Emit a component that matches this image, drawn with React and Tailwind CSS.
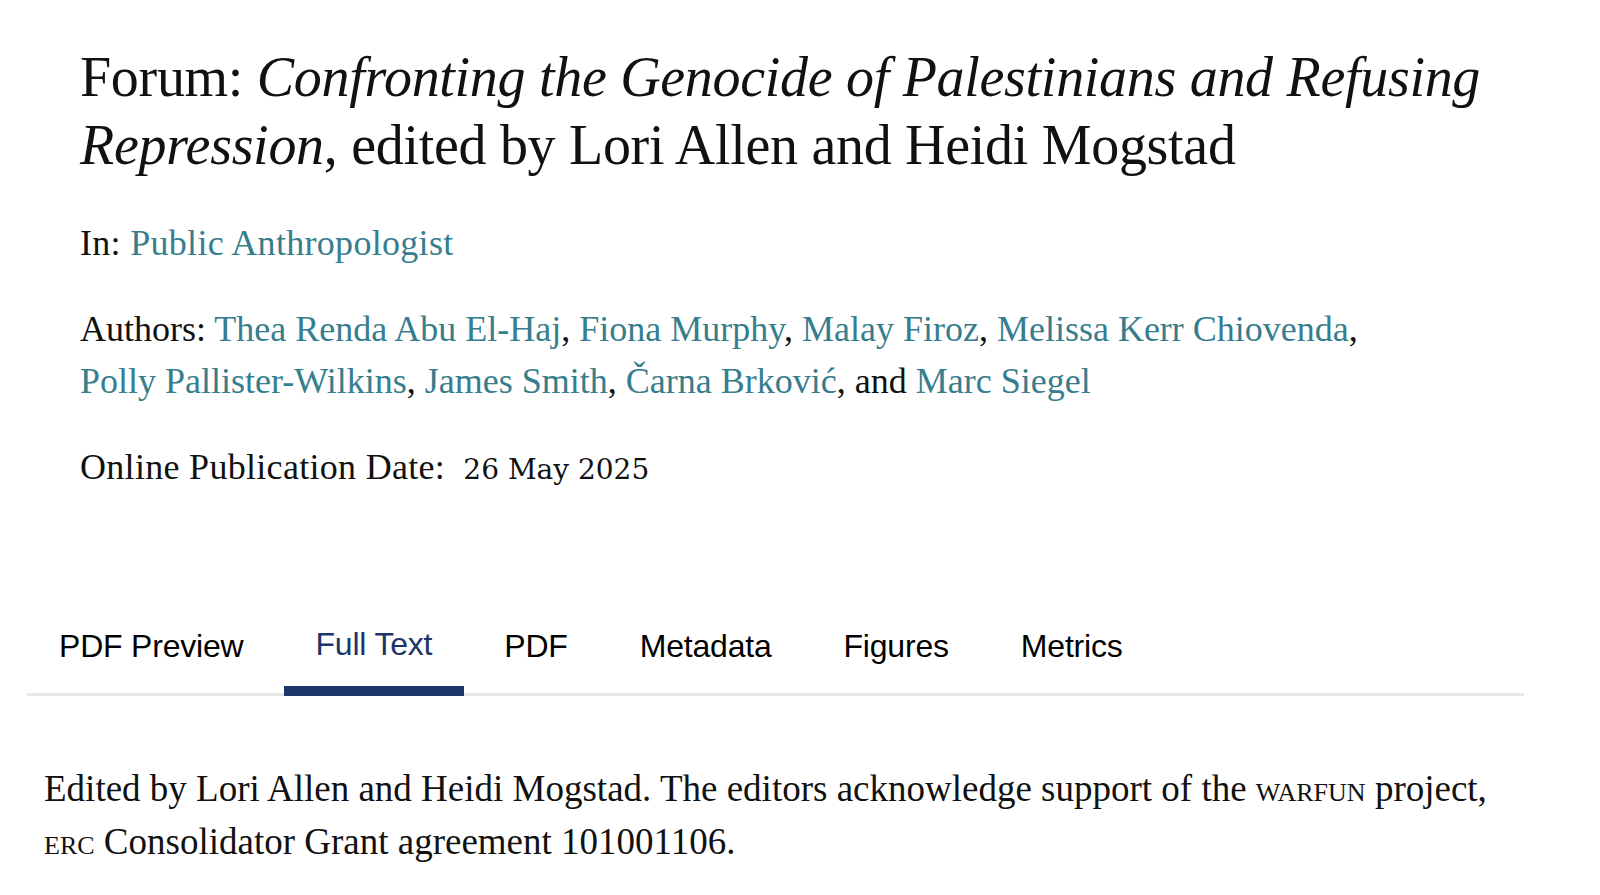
import React from "react";

const serif = "font-['Liberation_Serif','Times_New_Roman',serif]";

const authors = [
  "Thea Renda Abu El-Haj",
  "Fiona Murphy",
  "Malay Firoz",
  "Melissa Kerr Chiovenda",
];
const authors2 = [
  "Polly Pallister-Wilkins",
  "James Smith",
  "Čarna Brković",
];

const tabs = ["PDF Preview", "Full Text", "PDF", "Metadata", "Figures", "Metrics"];

const Link = ({ children }) => (
  <a href="#" className="text-[#367d8d] hover:underline">
    {children}
  </a>
);

export default function App() {
  return (
    <div className={`min-h-screen bg-white text-[#111] ${serif}`}>
      <div className="pl-[80px] pt-[43px]">
        <h1 className="text-[56px] leading-[68px] tracking-[-0.3px]">
          Forum: <i>Confronting the Genocide of Palestinians and Refusing</i>
          <br />
          <i>Repression</i>, edited by Lori Allen and Heidi Mogstad
        </h1>

        <p className="mt-[38px] text-[36px] leading-[52px] tracking-[0.3px]">
          In: <Link>Public Anthropologist</Link>
        </p>

        <p className="mt-[34px] text-[36px] leading-[52px]">
          Authors:{" "}
          {authors.map((a, i) => (
            <span key={a}>
              <Link>{a}</Link>
              {i < authors.length - 1 ? ", " : ","}
            </span>
          ))}
          <br />
          {authors2.map((a) => (
            <span key={a}>
              <Link>{a}</Link>,{" "}
            </span>
          ))}
          and <Link>Marc Siegel</Link>
        </p>

        <p className="mt-[34px] text-[36px] leading-[52px] tracking-[0.3px]">
          Online Publication Date:{" "}
          <span className="font-['DejaVu_Serif',serif] text-[28px] tracking-normal">
            &nbsp;26 May 2025
          </span>
        </p>
      </div>

      <div className="mt-[120px] ml-[27px] w-[1497px] flex items-end gap-[8px] border-b-[3px] border-[#e8e8e8] font-['Liberation_Sans',Arial,sans-serif]">
        {tabs.map((t) => {
          const active = t === "Full Text";
          return (
            <a
              key={t}
              href="#"
              className={
                active
                  ? "-mb-[3px] block px-[32px] pt-[12px] pb-[26px] text-[32px] leading-[32px] tracking-[-0.2px] text-[#1b3566] border-b-[10px] border-[#1b3566]"
                  : "-mb-[3px] block px-[32px] pt-[14px] pb-[24px] text-[32px] leading-[32px] tracking-[-0.2px] text-black border-b-[10px] border-transparent"
              }
            >
              {t}
            </a>
          );
        })}
      </div>

      <p className="mt-[66px] pl-[44px] text-[37px] leading-[53px]">
        Edited by Lori Allen and Heidi Mogstad. The editors acknowledge support of the{" "}
        <span className="[font-variant:small-caps]">warfun</span> project,
        <br />
        <span className="[font-variant:small-caps]">erc</span> Consolidator Grant agreement 101001106.
      </p>
    </div>
  );
}
